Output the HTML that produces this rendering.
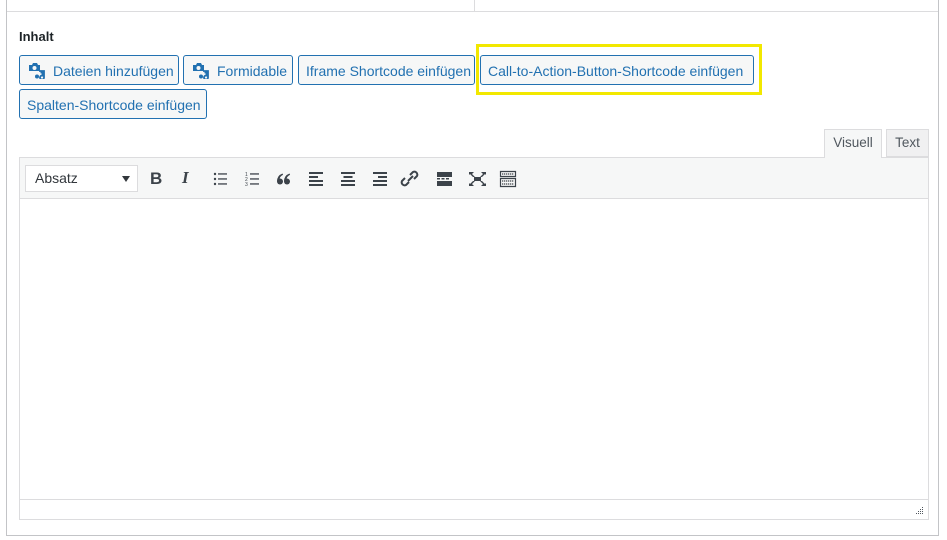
<!DOCTYPE html>
<html><head><meta charset="utf-8"><style>
*{box-sizing:border-box;margin:0;padding:0}
body{width:947px;height:540px;background:#fff;font-family:"Liberation Sans",Arial,sans-serif;position:relative;overflow:hidden;color:#1d2327}
.a{position:absolute}
.btn{position:absolute;height:30px;border:1px solid #2271b1;border-radius:3px;background:#f6f7f7;color:#2271b1;font-size:14px;line-height:30px;padding:0 7px;white-space:nowrap}
.ic{position:absolute;top:170px}
</style></head><body>
<div class="a" style="left:6px;top:0;width:933px;height:536px;border:1px solid #c3c4c7;border-top:none"></div>
<div class="a" style="left:7px;top:11px;width:931px;height:1px;background:#dcdcde"></div>
<div class="a" style="left:474px;top:0;width:1px;height:11px;background:#dcdcde"></div>
<div class="a" style="left:19px;top:29px;font-size:13px;font-weight:bold;color:#1d2327">Inhalt</div>

<div class="btn" style="left:19px;top:55px;width:160px;padding-left:33px">Dateien hinzufügen</div>
<div class="btn" style="left:183px;top:55px;width:110px;padding-left:33px">Formidable</div>
<svg class="a" style="left:28px;top:62px" width="20" height="17" viewBox="0 0 20 17"><path d="M1 3h3l1-2h4l1 2h2v6H1z" fill="#2271b1"/><circle cx="6.5" cy="6" r="2" fill="#f6f7f7"/><path d="M11 9h5v6.5a2 2 0 1 1-1.5-1.9V10.5h-2" fill="none" stroke="#2271b1" stroke-width="1.8"/><circle cx="9" cy="14.5" r="2" fill="#2271b1"/></svg>
<svg class="a" style="left:192px;top:62px" width="20" height="17" viewBox="0 0 20 17"><path d="M1 3h3l1-2h4l1 2h2v6H1z" fill="#2271b1"/><circle cx="6.5" cy="6" r="2" fill="#f6f7f7"/><path d="M11 9h5v6.5a2 2 0 1 1-1.5-1.9V10.5h-2" fill="none" stroke="#2271b1" stroke-width="1.8"/><circle cx="9" cy="14.5" r="2" fill="#2271b1"/></svg>
<div class="btn" style="left:298px;top:55px;width:177px">Iframe Shortcode einfügen</div>
<div class="a" style="left:476px;top:44px;width:286px;height:51px;border:3px solid #f2e800"></div>
<div class="btn" style="left:480px;top:55px;width:274px">Call-to-Action-Button-Shortcode einfügen</div>
<div class="btn" style="left:19px;top:89px;width:188px">Spalten-Shortcode einfügen</div>

<div class="a" style="left:824px;top:129px;width:58px;height:29px;border:1px solid #dcdcde;border-bottom:none;background:#f6f7f7;font-size:13.5px;line-height:26px;text-align:center;color:#50575e;z-index:2">Visuell</div>
<div class="a" style="left:886px;top:129px;width:43px;height:28px;border:1px solid #dcdcde;background:#f0f0f1;font-size:13.5px;line-height:26px;text-align:center;color:#50575e">Text</div>

<div class="a" style="left:19px;top:157px;width:910px;height:363px;border:1px solid #dcdcde"></div>
<div class="a" style="left:20px;top:158px;width:908px;height:41px;background:#f6f7f7;border-bottom:1px solid #dcdcde"></div>
<div class="a" style="left:20px;top:499px;width:908px;height:1px;background:#dcdcde"></div>
<div class="a" style="left:25px;top:165px;width:113px;height:27px;border:1px solid #dcdcde;background:#fff;font-size:14px;line-height:25px;padding-left:9px;color:#32373c">Absatz</div>
<div class="a" style="left:122px;top:176px;width:0;height:0;border-left:4px solid transparent;border-right:4px solid transparent;border-top:6px solid #32373c"></div>

<div class="ic" style="left:150px;font-weight:bold;font-size:17px;color:#3c434a;top:169px">B</div>
<div class="ic" style="left:182px;font-style:italic;font-weight:bold;font-size:17px;font-family:'Liberation Serif',serif;color:#3c434a;top:168px">I</div>
<svg class="ic" style="left:212px" width="220" height="18" viewBox="0 0 220 18" fill="#3c434a">
<circle cx="3" cy="4" r="1.2"/><circle cx="3" cy="9" r="1.2"/><circle cx="3" cy="14" r="1.2"/>
<rect x="6" y="3.3" width="9" height="1.3"/><rect x="6" y="8.3" width="9" height="1.3"/><rect x="6" y="13.3" width="9" height="1.3"/>
<text x="33" y="6" font-size="5" font-family="Liberation Sans">1</text><text x="33" y="11" font-size="5" font-family="Liberation Sans">2</text><text x="33" y="16" font-size="5" font-family="Liberation Sans">3</text>
<rect x="38" y="3.3" width="9" height="1.3"/><rect x="38" y="8.3" width="9" height="1.3"/><rect x="38" y="13.3" width="9" height="1.3"/>
<circle cx="68" cy="11.5" r="3"/><path d="M65 11.5Q65 5.5 70.5 3.5l.6 1.3Q67.5 6.5 67.5 10z"/>
<circle cx="75" cy="11.5" r="3"/><path d="M72 11.5Q72 5.5 77.5 3.5l.6 1.3Q74.5 6.5 74.5 10z"/>
<rect x="97" y="2" width="14" height="2"/><rect x="97" y="6" width="9" height="2"/><rect x="97" y="10" width="14" height="2"/><rect x="97" y="14" width="14" height="2"/>
<rect x="129" y="2" width="14" height="2"/><rect x="131.5" y="6" width="9" height="2"/><rect x="129" y="10" width="14" height="2"/><rect x="129" y="14" width="14" height="2"/>
<rect x="161" y="2" width="14" height="2"/><rect x="166" y="6" width="9" height="2"/><rect x="161" y="10" width="14" height="2"/><rect x="161" y="14" width="14" height="2"/>
<path d="M198 5l3-3a3 3 0 0 1 4 4l-3 3M197 12l-3 3a3 3 0 0 1-4-4l3-3M196 11l5-5" fill="none" stroke="#3c434a" stroke-width="2"/>
</svg>
<svg class="ic" style="left:436px" width="82" height="18" viewBox="0 0 82 18" fill="#3c434a">
<rect x="1" y="2" width="15" height="5"/><rect x="1" y="8" width="3" height="1.5"/><rect x="5.5" y="8" width="3" height="1.5"/><rect x="10" y="8" width="3" height="1.5"/><rect x="1" y="11" width="15" height="5"/>
<path d="M33 2h5l-2 2 3 3h-2l-3-3-1 1zM50 2h-5l2 2-3 3h2l3-3 1 1zM33 16h5l-2-2 3-3h-2l-3 3-1-1zM50 16h-5l2-2-3-3h2l3 3 1-1z"/><rect x="38" y="7" width="7" height="4"/>
<path d="M64.5 1.5h15v5h-15zM64.5 8.5h15v8h-15z" fill="none" stroke="#3c434a" stroke-width="1.2"/>
<path d="M66 4h12M66 11h12M66 14h12" stroke="#3c434a" stroke-width="1.3" stroke-dasharray="1.3 0.7" fill="none"/>
</svg>
<svg class="a" style="left:914px;top:506px" width="10" height="10" viewBox="0 0 10 10" fill="#50575e"><rect x="8" y="1" width="1" height="1"/><rect x="8" y="3" width="1" height="1"/><rect x="6" y="3" width="1" height="1"/><rect x="8" y="5" width="1" height="1"/><rect x="6" y="5" width="1" height="1"/><rect x="4" y="5" width="1" height="1"/><rect x="8" y="7" width="1" height="1"/><rect x="6" y="7" width="1" height="1"/><rect x="4" y="7" width="1" height="1"/><rect x="2" y="7" width="1" height="1"/></svg>
</body></html>
